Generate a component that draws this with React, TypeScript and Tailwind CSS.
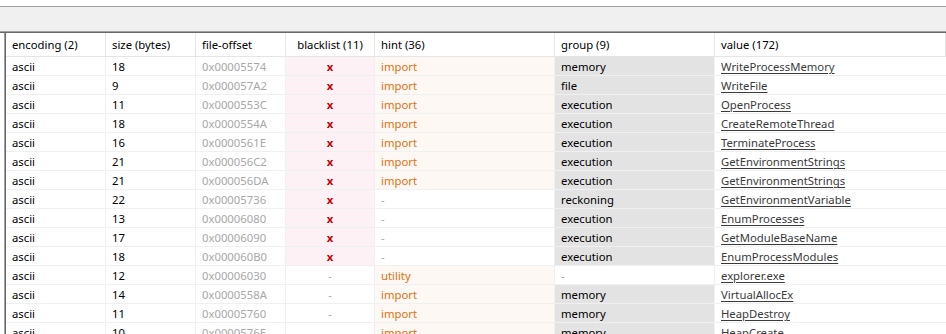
import React from "react";

type Row = {
  enc: string;
  size: string;
  offset: string;
  black: boolean;
  hint: string;
  group: string;
  value: string;
};

const rows: Row[] = [
  { enc: "ascii", size: "18", offset: "0x00005574", black: true, hint: "import", group: "memory", value: "WriteProcessMemory" },
  { enc: "ascii", size: "9", offset: "0x000057A2", black: true, hint: "import", group: "file", value: "WriteFile" },
  { enc: "ascii", size: "11", offset: "0x0000553C", black: true, hint: "import", group: "execution", value: "OpenProcess" },
  { enc: "ascii", size: "18", offset: "0x0000554A", black: true, hint: "import", group: "execution", value: "CreateRemoteThread" },
  { enc: "ascii", size: "16", offset: "0x0000561E", black: true, hint: "import", group: "execution", value: "TerminateProcess" },
  { enc: "ascii", size: "21", offset: "0x000056C2", black: true, hint: "import", group: "execution", value: "GetEnvironmentStrings" },
  { enc: "ascii", size: "21", offset: "0x000056DA", black: true, hint: "import", group: "execution", value: "GetEnvironmentStrings" },
  { enc: "ascii", size: "22", offset: "0x00005736", black: true, hint: "-", group: "reckoning", value: "GetEnvironmentVariable" },
  { enc: "ascii", size: "13", offset: "0x00006080", black: true, hint: "-", group: "execution", value: "EnumProcesses" },
  { enc: "ascii", size: "17", offset: "0x00006090", black: true, hint: "-", group: "execution", value: "GetModuleBaseName" },
  { enc: "ascii", size: "18", offset: "0x000060B0", black: true, hint: "-", group: "execution", value: "EnumProcessModules" },
  { enc: "ascii", size: "12", offset: "0x00006030", black: false, hint: "utility", group: "-", value: "explorer.exe" },
  { enc: "ascii", size: "14", offset: "0x0000558A", black: false, hint: "import", group: "memory", value: "VirtualAllocEx" },
  { enc: "ascii", size: "11", offset: "0x00005760", black: false, hint: "import", group: "memory", value: "HeapDestroy" },
  { enc: "ascii", size: "10", offset: "0x0000576E", black: false, hint: "import", group: "memory", value: "HeapCreate" },
];

const cols = "grid grid-cols-[100px_90px_90px_89px_180px_160px_1fr]";
const cell = "h-[19px] border-b border-r border-[#f0f0f0] px-[6px] pt-[1px] leading-[17px] whitespace-nowrap overflow-hidden";
const head = "h-[24px] border-b border-r border-[#e5e5e5] px-[6px] pt-[1px] leading-[22px] whitespace-nowrap";

export default function App() {
  return (
    <div className="w-[946px] h-[334px] overflow-hidden bg-white text-[11.3px] text-black font-['Noto_Sans',sans-serif]">
      <div className="h-[7px] border-b border-[#a0a0a0]" />
      <div className="h-[24px] bg-[#f0f0f0]" />
      <div className="h-[1px] bg-[#a0a0a0]" />
      <div className="h-[1px] bg-[#696969]" />
      <div className="flex">
        <div className="w-[4px] shrink-0" />
        <div className="w-[1px] shrink-0 bg-[#a0a0a0]" />
        <div className="w-[1px] shrink-0 bg-[#696969]" />
        <div className={`${cols} flex-1`}>
          <div className={head}>encoding (2)</div>
          <div className={head}>size (bytes)</div>
          <div className={head}>file-offset</div>
          <div className={`${head} text-center`}>blacklist (11)</div>
          <div className={head}>hint (36)</div>
          <div className={head}>group (9)</div>
          <div className={head}>value (172)</div>
          {rows.map((r, i) => (
            <React.Fragment key={i}>
              <div className={cell}>{r.enc}</div>
              <div className={cell}>{r.size}</div>
              <div className={`${cell} text-[#a8a8a8]`}>{r.offset}</div>
              {r.black ? (
                <div className={`${cell} bg-[#fdf1f6] text-center font-bold text-[#c00000]`}>x</div>
              ) : (
                <div className={`${cell} text-center text-[#a8a8a8]`}>-</div>
              )}
              {r.hint === "-" ? (
                <div className={`${cell} text-[#a8a8a8]`}>-</div>
              ) : (
                <div className={`${cell} bg-[#fdf8f3] text-[#e07010]`}>{r.hint}</div>
              )}
              {r.group === "-" ? (
                <div className={`${cell} text-[#a8a8a8]`}>-</div>
              ) : (
                <div className={`${cell} bg-[#e3e3e3]`}>{r.group}</div>
              )}
              <div className={`${cell} border-r-0 text-[#3a3a3a] underline underline-offset-2`}>{r.value}</div>
            </React.Fragment>
          ))}
        </div>
      </div>
    </div>
  );
}
